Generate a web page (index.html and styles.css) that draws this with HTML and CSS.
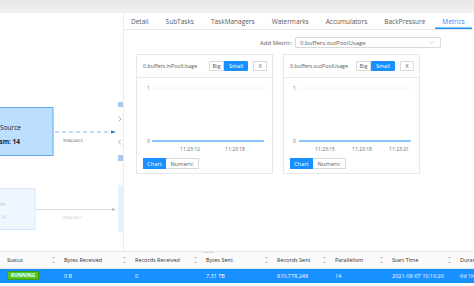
FILE: index.html
```html
<!DOCTYPE html>
<html lang="en">
<head>
    <meta charset="UTF-8">
    <title>Job Vertex Metrics</title>
    <meta name="viewport" content="width=device-width">
    <link rel="stylesheet" href="styles.css">
</head>
<body>
    <div class="topbar"></div>

    <div class="main">
        <div class="graph">
            <svg width="123" height="238" viewBox="0 0 123 238">
                <!-- source node, cut by the left edge -->
                <rect x="-3" y="94.5" width="56" height="48" fill="#bcdfff" stroke="#5ea8ee"/>
                <text x="21" y="117" text-anchor="end" class="node-title">Custom Source</text>
                <text x="20" y="131" text-anchor="end" class="node-para">Parallelism: 14</text>
                <line x1="55" y1="119" x2="112" y2="119" stroke="#86b4e2" stroke-dasharray="4 3"/>
                <path d="M111 117.5 L116 119 L111 120.5 Z" fill="#2d6fb8"/>
                <text x="63" y="128.5" class="edge-label">REBALANCE</text>

                <!-- next column, hidden behind the panel -->
                <rect x="118" y="89" width="5" height="5" fill="#a9cbf0"/>
                <path d="M118.5 103.5 L121 106 L118.5 108.5" fill="none" stroke="#7fa3cc" stroke-width="0.8"/>
                <path d="M121 126.5 L118.5 129 L121 131.5" fill="none" stroke="#7fa3cc" stroke-width="0.8"/>
                <rect x="118" y="142" width="5" height="6" fill="#a9cbf0"/>
                <rect x="118" y="172" width="5" height="47" fill="#e7f1fc"/>

                <!-- faded node -->
                <rect x="-3" y="175.5" width="38" height="41" fill="#eef6ff" stroke="#d6e8fb"/>
                <text x="5" y="193" text-anchor="end" class="node-faded">Sink</text>
                <text x="6" y="206" text-anchor="end" class="node-faded">Parallelism: 14</text>
                <line x1="35" y1="196.5" x2="113" y2="196.5" stroke="#dedede"/>
                <path d="M112 195 L116 196.5 L112 198 Z" fill="#bbbbbb"/>
                <text x="63" y="205.5" class="edge-label faded">REBALANCE</text>
            </svg>
        </div>

        <div class="panel">
            <div class="tabs">
                <span class="tab">Detail</span>
                <span class="tab">SubTasks</span>
                <span class="tab">TaskManagers</span>
                <span class="tab">Watermarks</span>
                <span class="tab">Accumulators</span>
                <span class="tab">BackPressure</span>
                <span class="tab active">Metrics</span>
            </div>

            <div class="add-metric">
                <label>Add Metric:</label>
                <div class="select">
                    <span>0.buffers.outPoolUsage</span>
                    <svg width="5" height="3" viewBox="0 0 5 3"><path d="M0.5 0.5 L2.5 2.5 L4.5 0.5" fill="none" stroke="#bfbfbf" stroke-width="0.7"/></svg>
                </div>
            </div>

            <div class="cards">
                <div class="card">
                    <div class="card-head">
                        <span class="card-title">0.buffers.inPoolUsage</span>
                        <span class="btn-group">
                            <span class="btn big">Big</span><span class="btn small on">Small</span>
                        </span>
                        <span class="btn close">X</span>
                    </div>
                    <svg class="chart" width="135" height="78" viewBox="0 0 135 78">
                        <text x="10" y="12">1</text>
                        <line x1="15" y1="10" x2="128" y2="10" stroke="#e6e6e6" stroke-dasharray="2 2"/>
                        <text x="10" y="65">0</text>
                        <line x1="15" y1="63" x2="127" y2="63" stroke="#1890ff" stroke-width="1.2"/>
                        <text x="53" y="73" text-anchor="middle">11:23:12</text>
                        <text x="98" y="73" text-anchor="middle">11:23:18</text>
                    </svg>
                    <div class="view-switch">
                        <span class="btn chart-btn on">Chart</span><span class="btn num-btn">Numeric</span>
                    </div>
                </div>

                <div class="card">
                    <div class="card-head">
                        <span class="card-title">0.buffers.outPoolUsage</span>
                        <span class="btn-group">
                            <span class="btn big">Big</span><span class="btn small on">Small</span>
                        </span>
                        <span class="btn close">X</span>
                    </div>
                    <svg class="chart" width="135" height="78" viewBox="0 0 135 78">
                        <text x="9" y="12">1</text>
                        <line x1="15" y1="10" x2="128" y2="10" stroke="#e6e6e6" stroke-dasharray="2 2"/>
                        <text x="9" y="65">0</text>
                        <line x1="15" y1="63" x2="127" y2="63" stroke="#1890ff" stroke-width="1.2"/>
                        <text x="41" y="73" text-anchor="middle">11:23:15</text>
                        <text x="78" y="73" text-anchor="middle">11:23:18</text>
                        <text x="115" y="73" text-anchor="middle">11:23:21</text>
                    </svg>
                    <div class="view-switch">
                        <span class="btn chart-btn on">Chart</span><span class="btn num-btn">Numeric</span>
                    </div>
                </div>
            </div>
        </div>
    </div>

    <div class="bottom">
        <span class="handle"></span>
        <table class="subtasks">
            <colgroup>
                <col style="width:59px"><col style="width:71px"><col style="width:71px"><col style="width:71px">
                <col style="width:58px"><col style="width:57px"><col style="width:68px"><col style="width:65px">
            </colgroup>
            <thead>
                <tr>
                    <th><div class="th">Status<i class="sort"></i></div></th>
                    <th><div class="th">Bytes Received<i class="sort"></i></div></th>
                    <th><div class="th">Records Received<i class="sort"></i></div></th>
                    <th><div class="th">Bytes Sent<i class="sort"></i></div></th>
                    <th><div class="th">Records Sent<i class="sort"></i></div></th>
                    <th><div class="th">Parallelism<i class="sort"></i></div></th>
                    <th><div class="th">Start Time<i class="sort"></i></div></th>
                    <th><div class="th">Duration<i class="sort"></i></div></th>
                </tr>
            </thead>
            <tbody>
                <tr class="selected">
                    <td><span class="badge">RUNNING</span></td>
                    <td>0 B</td>
                    <td>0</td>
                    <td>7.31 TB</td>
                    <td>810,778,248</td>
                    <td>14</td>
                    <td>2021-08-07 10:10:20</td>
                    <td>6d 1h</td>
                </tr>
            </tbody>
        </table>
    </div>
</body>
</html>
```

FILE: styles.css
```css
*,
*::before,
*::after{
    margin: 0;
    padding: 0;
    box-sizing: border-box;
}
html{
    font-family: "Open Sans", "Noto Sans", sans-serif;
    color: #595959;
}
body{
    width: 474px;
    height: 286px;
    overflow: hidden;
    background: #fff;
}
.topbar{
    height: 13px;
    background: linear-gradient(#e6e6e6, #f1f1f1);
}
.main{
    display: flex;
    height: 238px;
}

/* job graph */
.graph{
    width: 123px;
    flex: none;
    overflow: hidden;
}
.graph svg{
    display: block;
}
.node-title{
    font-size: 6.5px;
    fill: #222;
}
.node-para{
    font-size: 6.5px;
    font-weight: bold;
    fill: #222;
}
.node-faded{
    font-size: 4.5px;
    fill: #c4c4c4;
}
.edge-label{
    font-size: 3.6px;
    fill: #7a7a7a;
}
.edge-label.faded{
    fill: #cfcfcf;
}

/* right panel */
.panel{
    flex: 1;
    border-left: 1px solid #ebebeb;
    min-width: 0;
}
.tabs{
    display: flex;
    height: 17px;
    border-bottom: 1px solid #e8e8e8;
}
.tab{
    padding: 1px 7px 0;
    margin-right: 3px;
    font-size: 6.5px;
    line-height: 15px;
    color: #595959;
    white-space: nowrap;
}
.tab.active{
    color: #1890ff;
    box-shadow: inset 0 -1.5px 0 #1890ff;
}
.add-metric{
    display: flex;
    justify-content: flex-end;
    align-items: center;
    margin-top: 7px;
    padding-right: 33px;
    height: 11px;
}
.add-metric label{
    font-size: 6px;
    margin-right: 3px;
    color: #595959;
}
.select{
    width: 146px;
    height: 11px;
    border: 1px solid #d9d9d9;
    border-radius: 1px;
    display: flex;
    align-items: center;
    justify-content: space-between;
    padding: 0 6px 0 4px;
    font-size: 6px;
    color: #595959;
}
.cards{
    display: flex;
    gap: 10px;
    padding-left: 12px;
    margin-top: 6px;
}
.card{
    width: 137px;
    height: 120px;
    border: 1px solid #e8e8e8;
}
.card-head{
    height: 23px;
    border-bottom: 1px solid #e8e8e8;
    display: flex;
    align-items: center;
    padding: 0 5px 0 6px;
}
.card-title{
    font-size: 5.3px;
    color: #595959;
    flex: 1;
    white-space: nowrap;
}
.btn-group{
    display: flex;
}
.btn{
    display: inline-flex;
    align-items: center;
    justify-content: center;
    height: 10px;
    border: 1px solid #d9d9d9;
    background: #fff;
    font-size: 5.5px;
    color: #595959;
}
.btn.on{
    background: #1890ff;
    border-color: #1890ff;
    color: #fff;
}
.btn.big{
    width: 15px;
    border-radius: 1px 0 0 1px;
}
.btn.small{
    width: 24px;
    border-radius: 0 1px 1px 0;
}
.btn.close{
    width: 14px;
    margin-left: 5px;
    border-radius: 1px;
}
.chart{
    display: block;
}
.chart text{
    font-size: 5px;
    fill: #6b6b6b;
}
.view-switch{
    display: flex;
    margin: 2px 0 0 6px;
}
.btn.chart-btn{
    width: 23px;
    height: 11px;
    font-size: 5.8px;
}
.btn.num-btn{
    width: 33px;
    height: 11px;
    font-size: 5.8px;
    border-left: none;
}

/* subtask table */
.bottom{
    position: relative;
    border-top: 1px solid #e8e8e8;
    overflow: hidden;
    height: 35px;
}
.handle{
    position: absolute;
    left: 202px;
    top: -3px;
    width: 13px;
    height: 4px;
    border: 1px solid #d9d9d9;
    border-radius: 2px;
    background: #fff;
}
.subtasks{
    width: 520px;
    table-layout: fixed;
    border-collapse: collapse;
    font-size: 5.5px;
}
.subtasks th{
    height: 16px;
    background: #fafafa;
    border-bottom: 1px solid #e8e8e8;
    font-weight: normal;
    color: #333;
    text-align: left;
    padding: 0 4px 0 5px;
}
.subtasks th:first-child,
.subtasks td:first-child{
    padding-left: 7px;
}
.th{
    display: flex;
    justify-content: space-between;
    align-items: center;
    white-space: nowrap;
}
.sort{
    width: 3px;
    height: 6px;
    background:
        linear-gradient(to top right, transparent 50%, #bfbfbf 50%) 0 0 / 1.5px 2px no-repeat,
        linear-gradient(to top left, transparent 50%, #bfbfbf 50%) 1.5px 0 / 1.5px 2px no-repeat,
        linear-gradient(to bottom right, transparent 50%, #bfbfbf 50%) 0 4px / 1.5px 2px no-repeat,
        linear-gradient(to bottom left, transparent 50%, #bfbfbf 50%) 1.5px 4px / 1.5px 2px no-repeat;
}
.subtasks td{
    height: 15px;
    padding: 0 4px 0 5px;
    white-space: nowrap;
}
.selected td{
    background: #1890ff;
    color: #fff;
}
.badge{
    display: inline-block;
    width: 32px;
    height: 9px;
    line-height: 7px;
    background: #52c41a;
    border: 1px solid #3f9e14;
    border-radius: 1px;
    color: #fff;
    font-weight: bold;
    font-size: 5px;
    text-align: center;
    vertical-align: middle;
}
```
